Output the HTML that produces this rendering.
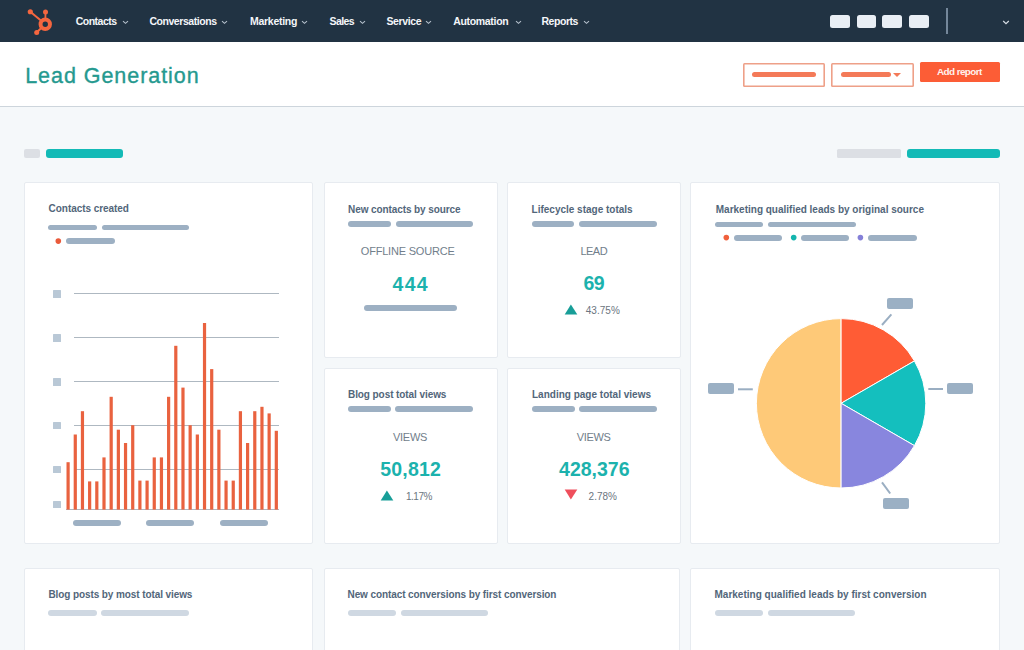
<!DOCTYPE html>
<html><head><meta charset="utf-8"><title>Lead Generation</title>
<style>
html,body{margin:0;padding:0}
body{width:1024px;height:650px;overflow:hidden;position:relative;background:#f5f8fa;font-family:"Liberation Sans",sans-serif}
.t{position:absolute;white-space:nowrap;line-height:1}
.r{position:absolute}
.card{position:absolute;background:#fff;border:1px solid #e7ebf0;box-sizing:border-box;border-radius:2px}
</style></head><body>
<div class="r" style="left:0.00px;top:0.00px;width:1024.00px;height:42.00px;background:#213343;border-radius:0px;"></div>
<svg style="position:absolute;left:0;top:0" width="60" height="42" viewBox="0 0 60 42">
<g fill="none" stroke="#f5663f" stroke-linecap="round">
<circle cx="45.25" cy="24.2" r="4.7" stroke-width="4"/>
<line x1="30.3" y1="11.75" x2="41.5" y2="21" stroke-width="2"/>
<line x1="45.5" y1="12" x2="45.4" y2="19" stroke-width="1.8"/>
<line x1="36.7" y1="32.5" x2="41.5" y2="27.8" stroke-width="2"/>
</g>
<g fill="#f5663f"><circle cx="30.3" cy="11.75" r="2.6"/><circle cx="45.5" cy="12" r="2.5"/><circle cx="36.7" cy="32.5" r="2.5"/></g>
</svg>
<div class="t" style="left:75.70px;top:16.01px;font-size:10.5px;color:#f4f6f9;font-weight:bold;letter-spacing:-0.5px;">Contacts</div>
<svg style="position:absolute;left:121.8px;top:19px" width="7" height="6" viewBox="0 0 7 6"><path d="M1 2.1 L3.5 4.3 L6 2.1" fill="none" stroke="#b4c0cc" stroke-width="1.1"/></svg>
<div class="t" style="left:149.40px;top:16.01px;font-size:10.5px;color:#f4f6f9;font-weight:bold;letter-spacing:-0.446px;">Conversations</div>
<svg style="position:absolute;left:221.3px;top:19px" width="7" height="6" viewBox="0 0 7 6"><path d="M1 2.1 L3.5 4.3 L6 2.1" fill="none" stroke="#b4c0cc" stroke-width="1.1"/></svg>
<div class="t" style="left:250.00px;top:16.01px;font-size:10.5px;color:#f4f6f9;font-weight:bold;letter-spacing:-0.275px;">Marketing</div>
<svg style="position:absolute;left:301.3px;top:19px" width="7" height="6" viewBox="0 0 7 6"><path d="M1 2.1 L3.5 4.3 L6 2.1" fill="none" stroke="#b4c0cc" stroke-width="1.1"/></svg>
<div class="t" style="left:329.60px;top:16.01px;font-size:10.5px;color:#f4f6f9;font-weight:bold;letter-spacing:-0.587px;">Sales</div>
<svg style="position:absolute;left:359.3px;top:19px" width="7" height="6" viewBox="0 0 7 6"><path d="M1 2.1 L3.5 4.3 L6 2.1" fill="none" stroke="#b4c0cc" stroke-width="1.1"/></svg>
<div class="t" style="left:386.40px;top:16.01px;font-size:10.5px;color:#f4f6f9;font-weight:bold;letter-spacing:-0.342px;">Service</div>
<svg style="position:absolute;left:425.40000000000003px;top:19px" width="7" height="6" viewBox="0 0 7 6"><path d="M1 2.1 L3.5 4.3 L6 2.1" fill="none" stroke="#b4c0cc" stroke-width="1.1"/></svg>
<div class="t" style="left:453.20px;top:16.01px;font-size:10.5px;color:#f4f6f9;font-weight:bold;letter-spacing:-0.317px;">Automation</div>
<svg style="position:absolute;left:514.8px;top:19px" width="7" height="6" viewBox="0 0 7 6"><path d="M1 2.1 L3.5 4.3 L6 2.1" fill="none" stroke="#b4c0cc" stroke-width="1.1"/></svg>
<div class="t" style="left:541.50px;top:16.01px;font-size:10.5px;color:#f4f6f9;font-weight:bold;letter-spacing:-0.458px;">Reports</div>
<svg style="position:absolute;left:582.8px;top:19px" width="7" height="6" viewBox="0 0 7 6"><path d="M1 2.1 L3.5 4.3 L6 2.1" fill="none" stroke="#b4c0cc" stroke-width="1.1"/></svg>
<div class="r" style="left:830.40px;top:14.50px;width:19.90px;height:13.40px;background:#e9eff5;border-radius:2.5px;"></div>
<div class="r" style="left:856.90px;top:14.50px;width:19.50px;height:13.40px;background:#e9eff5;border-radius:2.5px;"></div>
<div class="r" style="left:882.20px;top:14.50px;width:19.50px;height:13.40px;background:#e9eff5;border-radius:2.5px;"></div>
<div class="r" style="left:908.60px;top:14.50px;width:20.00px;height:13.40px;background:#e9eff5;border-radius:2.5px;"></div>
<div class="r" style="left:945.50px;top:8.00px;width:2.00px;height:25.50px;background:#74879a;border-radius:0px;"></div>
<svg style="position:absolute;left:1002px;top:19px" width="8" height="7" viewBox="0 0 8 7"><path d="M1.2 2 L4 4.6 L6.8 2" fill="none" stroke="#d6dde5" stroke-width="1.2"/></svg>
<div class="r" style="left:0.00px;top:42.00px;width:1024.00px;height:64.00px;background:#ffffff;border-radius:0px;"></div>
<div class="r" style="left:0.00px;top:105.50px;width:1024.00px;height:1.50px;background:#cdd5dc;border-radius:0px;"></div>
<div class="t" style="left:25.20px;top:65.60px;font-size:21.5px;color:#25998f;letter-spacing:0.95px;-webkit-text-stroke:0.35px #25998f;">Lead Generation</div>
<div class="r" style="left:742.70px;top:62.50px;width:82.50px;height:24.10px;background:#fff;border-radius:1.5px;box-shadow:inset 0 0 0 1.6px #eea088"></div>
<div class="r" style="left:752.00px;top:72.00px;width:63.70px;height:5.40px;background:#f47a58;border-radius:3px;"></div>
<div class="r" style="left:831.30px;top:62.50px;width:82.70px;height:24.10px;background:#fff;border-radius:1.5px;box-shadow:inset 0 0 0 1.6px #eea088"></div>
<div class="r" style="left:840.80px;top:72.00px;width:50.10px;height:5.40px;background:#f47a58;border-radius:3px;"></div>
<svg style="position:absolute;left:892px;top:72px" width="10" height="6" viewBox="0 0 10 6"><path d="M1 1 L9 1 L5 5 Z" fill="#f47a58"/></svg>
<div class="r" style="left:920.00px;top:62.40px;width:79.70px;height:19.40px;background:#fc5d36;border-radius:1.5px;"></div>
<div class="t" style="left:937.00px;top:67.12px;font-size:9.9px;color:#fff2ee;font-weight:bold;letter-spacing:-0.567px;">Add report</div>
<div class="r" style="left:24.00px;top:149.20px;width:16.00px;height:8.80px;background:#dcdfe4;border-radius:2px;"></div>
<div class="r" style="left:45.50px;top:149.20px;width:77.50px;height:8.80px;background:#13bab6;border-radius:3px;"></div>
<div class="r" style="left:837.20px;top:149.20px;width:63.50px;height:8.80px;background:#dcdfe4;border-radius:1.5px;"></div>
<div class="r" style="left:906.90px;top:149.20px;width:93.10px;height:8.80px;background:#13bab6;border-radius:3px;"></div>
<div class="card" style="left:24px;top:182px;width:288.5px;height:362px"></div>
<div class="card" style="left:324px;top:182px;width:173.5px;height:176px"></div>
<div class="card" style="left:506.5px;top:182px;width:174.5px;height:176px"></div>
<div class="card" style="left:324px;top:368px;width:173.5px;height:176px"></div>
<div class="card" style="left:506.5px;top:368px;width:174.5px;height:176px"></div>
<div class="card" style="left:690px;top:182px;width:310px;height:362px"></div>
<div class="card" style="left:24px;top:568px;width:288.5px;height:92px"></div>
<div class="card" style="left:324px;top:568px;width:356px;height:92px"></div>
<div class="card" style="left:690px;top:568px;width:310px;height:92px"></div>
<div class="t" style="left:48.60px;top:204.44px;font-size:10px;color:#52667a;font-weight:bold;letter-spacing:-0.05px;">Contacts created</div>
<div class="r" style="left:48.00px;top:224.70px;width:49.00px;height:5.50px;background:#9db0c3;border-radius:3px;"></div>
<div class="r" style="left:101.70px;top:224.70px;width:87.50px;height:5.50px;background:#9db0c3;border-radius:3px;"></div>
<div class="r" style="left:65.50px;top:238.40px;width:49.00px;height:5.50px;background:#9db0c3;border-radius:3px;"></div>
<div class="r" style="left:53.20px;top:290.30px;width:7.40px;height:7.40px;background:#b9c8d6;border-radius:0.5px;"></div>
<div class="r" style="left:53.20px;top:334.30px;width:7.40px;height:7.40px;background:#b9c8d6;border-radius:0.5px;"></div>
<div class="r" style="left:53.20px;top:378.30px;width:7.40px;height:7.40px;background:#b9c8d6;border-radius:0.5px;"></div>
<div class="r" style="left:53.20px;top:422.10px;width:7.40px;height:7.40px;background:#b9c8d6;border-radius:0.5px;"></div>
<div class="r" style="left:53.20px;top:465.70px;width:7.40px;height:7.40px;background:#b9c8d6;border-radius:0.5px;"></div>
<div class="r" style="left:53.20px;top:501.10px;width:7.40px;height:7.40px;background:#b9c8d6;border-radius:0.5px;"></div>
<div class="r" style="left:73.60px;top:293.10px;width:205.90px;height:1.00px;background:#aeb8c1;border-radius:0px;"></div>
<div class="r" style="left:73.60px;top:337.10px;width:205.90px;height:1.00px;background:#aeb8c1;border-radius:0px;"></div>
<div class="r" style="left:73.60px;top:381.10px;width:205.90px;height:1.00px;background:#aeb8c1;border-radius:0px;"></div>
<div class="r" style="left:73.60px;top:425.00px;width:205.90px;height:1.00px;background:#aeb8c1;border-radius:0px;"></div>
<div class="r" style="left:73.60px;top:468.90px;width:205.90px;height:1.00px;background:#aeb8c1;border-radius:0px;"></div>
<div class="r" style="left:66.40px;top:508.90px;width:213.10px;height:1.00px;background:#aeb8c1;border-radius:0px;"></div>
<svg style="position:absolute;left:0;top:0" width="320" height="540" viewBox="0 0 320 540"><g fill="#e9623f"><rect x="66.50" y="462.2" width="3.2" height="47.40"/><rect x="73.68" y="434.5" width="3.2" height="75.10"/><rect x="80.86" y="411.2" width="3.2" height="98.40"/><rect x="88.04" y="481.4" width="3.2" height="28.20"/><rect x="95.22" y="481.4" width="3.2" height="28.20"/><rect x="102.40" y="457.4" width="3.2" height="52.20"/><rect x="109.58" y="396.8" width="3.2" height="112.80"/><rect x="116.76" y="429.7" width="3.2" height="79.90"/><rect x="123.94" y="443" width="3.2" height="66.60"/><rect x="131.12" y="425.2" width="3.2" height="84.40"/><rect x="138.30" y="480.6" width="3.2" height="29.00"/><rect x="145.48" y="480.6" width="3.2" height="29.00"/><rect x="152.66" y="457.4" width="3.2" height="52.20"/><rect x="159.84" y="457.4" width="3.2" height="52.20"/><rect x="167.02" y="396.8" width="3.2" height="112.80"/><rect x="174.20" y="345.8" width="3.2" height="163.80"/><rect x="181.38" y="387.6" width="3.2" height="122.00"/><rect x="188.56" y="425.2" width="3.2" height="84.40"/><rect x="195.74" y="434.5" width="3.2" height="75.10"/><rect x="202.92" y="323" width="3.2" height="186.60"/><rect x="210.10" y="369.1" width="3.2" height="140.50"/><rect x="217.28" y="429.7" width="3.2" height="79.90"/><rect x="224.46" y="480.6" width="3.2" height="29.00"/><rect x="231.64" y="480.6" width="3.2" height="29.00"/><rect x="238.82" y="411.2" width="3.2" height="98.40"/><rect x="246.00" y="443" width="3.2" height="66.60"/><rect x="253.18" y="411.2" width="3.2" height="98.40"/><rect x="260.36" y="406.8" width="3.2" height="102.80"/><rect x="267.54" y="413.4" width="3.2" height="96.20"/><rect x="274.72" y="430.8" width="3.2" height="78.80"/></g></svg>
<div class="r" style="left:72.70px;top:519.80px;width:48.50px;height:6.00px;background:#9db0c3;border-radius:3px;"></div>
<div class="r" style="left:146.40px;top:519.80px;width:48.10px;height:6.00px;background:#9db0c3;border-radius:3px;"></div>
<div class="r" style="left:220.00px;top:519.80px;width:48.40px;height:6.00px;background:#9db0c3;border-radius:3px;"></div>
<div class="t" style="left:348.10px;top:204.94px;font-size:10px;color:#52667a;font-weight:bold;letter-spacing:-0.095px;">New contacts by source</div>
<div class="r" style="left:348.00px;top:221.00px;width:42.80px;height:5.70px;background:#9db0c3;border-radius:3px;"></div>
<div class="r" style="left:395.50px;top:221.00px;width:77.50px;height:5.70px;background:#9db0c3;border-radius:3px;"></div>
<div class="t" style="left:257.80px;width:300px;text-align:center;top:245.89px;font-size:11px;color:#717e8b;letter-spacing:-0.2px;text-indent:-0.2px">OFFLINE SOURCE</div>
<div class="t" style="left:260.10px;width:300px;text-align:center;top:274.89px;font-size:19.5px;color:#1cb2ad;font-weight:bold;letter-spacing:1.2px;text-indent:1.2px">444</div>
<div class="r" style="left:364.00px;top:305.00px;width:92.90px;height:5.90px;background:#9db0c3;border-radius:3px;"></div>
<div class="t" style="left:531.60px;top:204.94px;font-size:10px;color:#52667a;font-weight:bold;letter-spacing:-0.007px;">Lifecycle stage totals</div>
<div class="r" style="left:531.60px;top:221.00px;width:42.90px;height:5.70px;background:#9db0c3;border-radius:3px;"></div>
<div class="r" style="left:578.60px;top:221.00px;width:78.40px;height:5.70px;background:#9db0c3;border-radius:3px;"></div>
<div class="t" style="left:444.00px;width:300px;text-align:center;top:246.09px;font-size:11px;color:#717e8b;letter-spacing:-0.5px;text-indent:-0.5px">LEAD</div>
<div class="t" style="left:444.00px;width:300px;text-align:center;top:274.49px;font-size:19.5px;color:#1cb2ad;font-weight:bold;letter-spacing:-0.5px;text-indent:-0.5px">69</div>
<svg style="position:absolute;left:564px;top:304px" width="14" height="11" viewBox="0 0 14 11"><path d="M0.7 10.5 L6.9 0.6 L13.3 10.5 Z" fill="#189e98"/></svg>
<div class="t" style="left:585.70px;top:305.74px;font-size:10px;color:#6b7580;letter-spacing:0.05px;">43.75%</div>
<div class="t" style="left:348.00px;top:390.33px;font-size:10px;color:#52667a;font-weight:bold;letter-spacing:-0.08px;">Blog post total views</div>
<div class="r" style="left:348.00px;top:406.40px;width:43.00px;height:5.60px;background:#9db0c3;border-radius:3px;"></div>
<div class="r" style="left:395.00px;top:406.40px;width:78.00px;height:5.60px;background:#9db0c3;border-radius:3px;"></div>
<div class="t" style="left:260.20px;width:300px;text-align:center;top:431.69px;font-size:11px;color:#717e8b;letter-spacing:-0.3px;text-indent:-0.3px">VIEWS</div>
<div class="t" style="left:260.50px;width:300px;text-align:center;top:460.29px;font-size:19.5px;color:#1cb2ad;font-weight:bold;letter-spacing:0.2px;text-indent:0.2px">50,812</div>
<svg style="position:absolute;left:380px;top:490px" width="14" height="11" viewBox="0 0 14 11"><path d="M0.7 10.5 L6.9 0.6 L13.3 10.5 Z" fill="#189e98"/></svg>
<div class="t" style="left:406.00px;top:491.84px;font-size:10px;color:#6b7580;letter-spacing:-0.5px;">1.17%</div>
<div class="t" style="left:532.00px;top:390.33px;font-size:10px;color:#52667a;font-weight:bold;letter-spacing:0.004px;">Landing page total views</div>
<div class="r" style="left:532.00px;top:406.40px;width:42.60px;height:5.60px;background:#9db0c3;border-radius:3px;"></div>
<div class="r" style="left:578.60px;top:406.40px;width:78.40px;height:5.60px;background:#9db0c3;border-radius:3px;"></div>
<div class="t" style="left:443.80px;width:300px;text-align:center;top:431.69px;font-size:11px;color:#717e8b;letter-spacing:-0.3px;text-indent:-0.3px">VIEWS</div>
<div class="t" style="left:444.30px;width:300px;text-align:center;top:460.29px;font-size:19.5px;color:#1cb2ad;font-weight:bold;letter-spacing:0px;text-indent:0px">428,376</div>
<svg style="position:absolute;left:564px;top:489px" width="14" height="11" viewBox="0 0 14 11"><path d="M0.7 0.5 L13.3 0.5 L6.9 10.5 Z" fill="#ef4f5c"/></svg>
<div class="t" style="left:588.60px;top:491.84px;font-size:10px;color:#6b7580;letter-spacing:0px;">2.78%</div>
<div class="t" style="left:715.80px;top:204.94px;font-size:10px;color:#52667a;font-weight:bold;letter-spacing:-0.005px;">Marketing qualified leads by original source</div>
<div class="r" style="left:714.70px;top:221.50px;width:48.70px;height:5.60px;background:#9db0c3;border-radius:3px;"></div>
<div class="r" style="left:767.90px;top:221.50px;width:88.10px;height:5.60px;background:#9db0c3;border-radius:3px;"></div>
<div class="r" style="left:733.50px;top:235.00px;width:48.50px;height:5.60px;background:#9db0c3;border-radius:3px;"></div>
<div class="r" style="left:800.50px;top:235.00px;width:48.90px;height:5.60px;background:#9db0c3;border-radius:3px;"></div>
<div class="r" style="left:867.80px;top:235.00px;width:48.80px;height:5.60px;background:#9db0c3;border-radius:3px;"></div>
<svg style="position:absolute;left:0;top:0" width="1024" height="260"><circle cx="726.3" cy="237.6" r="2.8" fill="#f0603c"/><circle cx="793.7" cy="237.6" r="2.8" fill="#14b5ae"/><circle cx="860.4" cy="237.6" r="2.8" fill="#8580d8"/><circle cx="58.3" cy="241.1" r="2.8" fill="#ea5a3a"/></svg>
<svg style="position:absolute;left:0;top:0" width="1024" height="650" viewBox="0 0 1024 650"><path d="M841.1,403.3 L841.10,488.00 A84.7,84.7 0 0 1 841.10,318.60 Z" fill="#fec978" stroke="#fff" stroke-width="1"/><path d="M841.1,403.3 L841.10,318.60 A84.7,84.7 0 0 1 914.45,360.95 Z" fill="#ff5c35" stroke="#fff" stroke-width="1"/><path d="M841.1,403.3 L914.45,360.95 A84.7,84.7 0 0 1 914.45,445.65 Z" fill="#14bfbe" stroke="#fff" stroke-width="1"/><path d="M841.1,403.3 L914.45,445.65 A84.7,84.7 0 0 1 841.10,488.00 Z" fill="#8886de" stroke="#fff" stroke-width="1"/><g stroke="#9aaec2" stroke-width="2"><line x1="882" y1="325" x2="891.4" y2="314.4"/><line x1="928.3" y1="389" x2="943" y2="389"/><line x1="738" y1="389.3" x2="752.8" y2="389.3"/><line x1="882" y1="482.4" x2="890.2" y2="493.5"/></g></svg>
<div class="r" style="left:887.30px;top:297.70px;width:26.20px;height:11.10px;background:#9bb0c4;border-radius:2px;"></div>
<div class="r" style="left:946.80px;top:383.40px;width:26.60px;height:11.10px;background:#9bb0c4;border-radius:2px;"></div>
<div class="r" style="left:708.00px;top:383.40px;width:26.00px;height:11.10px;background:#9bb0c4;border-radius:2px;"></div>
<div class="r" style="left:882.90px;top:498.00px;width:26.60px;height:11.00px;background:#9bb0c4;border-radius:2px;"></div>
<div class="t" style="left:48.40px;top:590.33px;font-size:10px;color:#52667a;font-weight:bold;letter-spacing:-0.093px;">Blog posts by most total views</div>
<div class="r" style="left:48.40px;top:610.40px;width:48.60px;height:5.60px;background:#cfd8e2;border-radius:3px;"></div>
<div class="r" style="left:101.40px;top:610.40px;width:87.60px;height:5.60px;background:#cfd8e2;border-radius:3px;"></div>
<div class="t" style="left:347.50px;top:590.33px;font-size:10px;color:#52667a;font-weight:bold;letter-spacing:-0.092px;">New contact conversions by first conversion</div>
<div class="r" style="left:347.50px;top:610.40px;width:48.50px;height:5.60px;background:#cfd8e2;border-radius:3px;"></div>
<div class="r" style="left:400.50px;top:610.40px;width:87.50px;height:5.60px;background:#cfd8e2;border-radius:3px;"></div>
<div class="t" style="left:714.50px;top:590.33px;font-size:10px;color:#52667a;font-weight:bold;letter-spacing:0.007px;">Marketing qualified leads by first conversion</div>
<div class="r" style="left:714.50px;top:610.40px;width:48.50px;height:5.60px;background:#cfd8e2;border-radius:3px;"></div>
<div class="r" style="left:767.50px;top:610.40px;width:87.50px;height:5.60px;background:#cfd8e2;border-radius:3px;"></div>
</body></html>
